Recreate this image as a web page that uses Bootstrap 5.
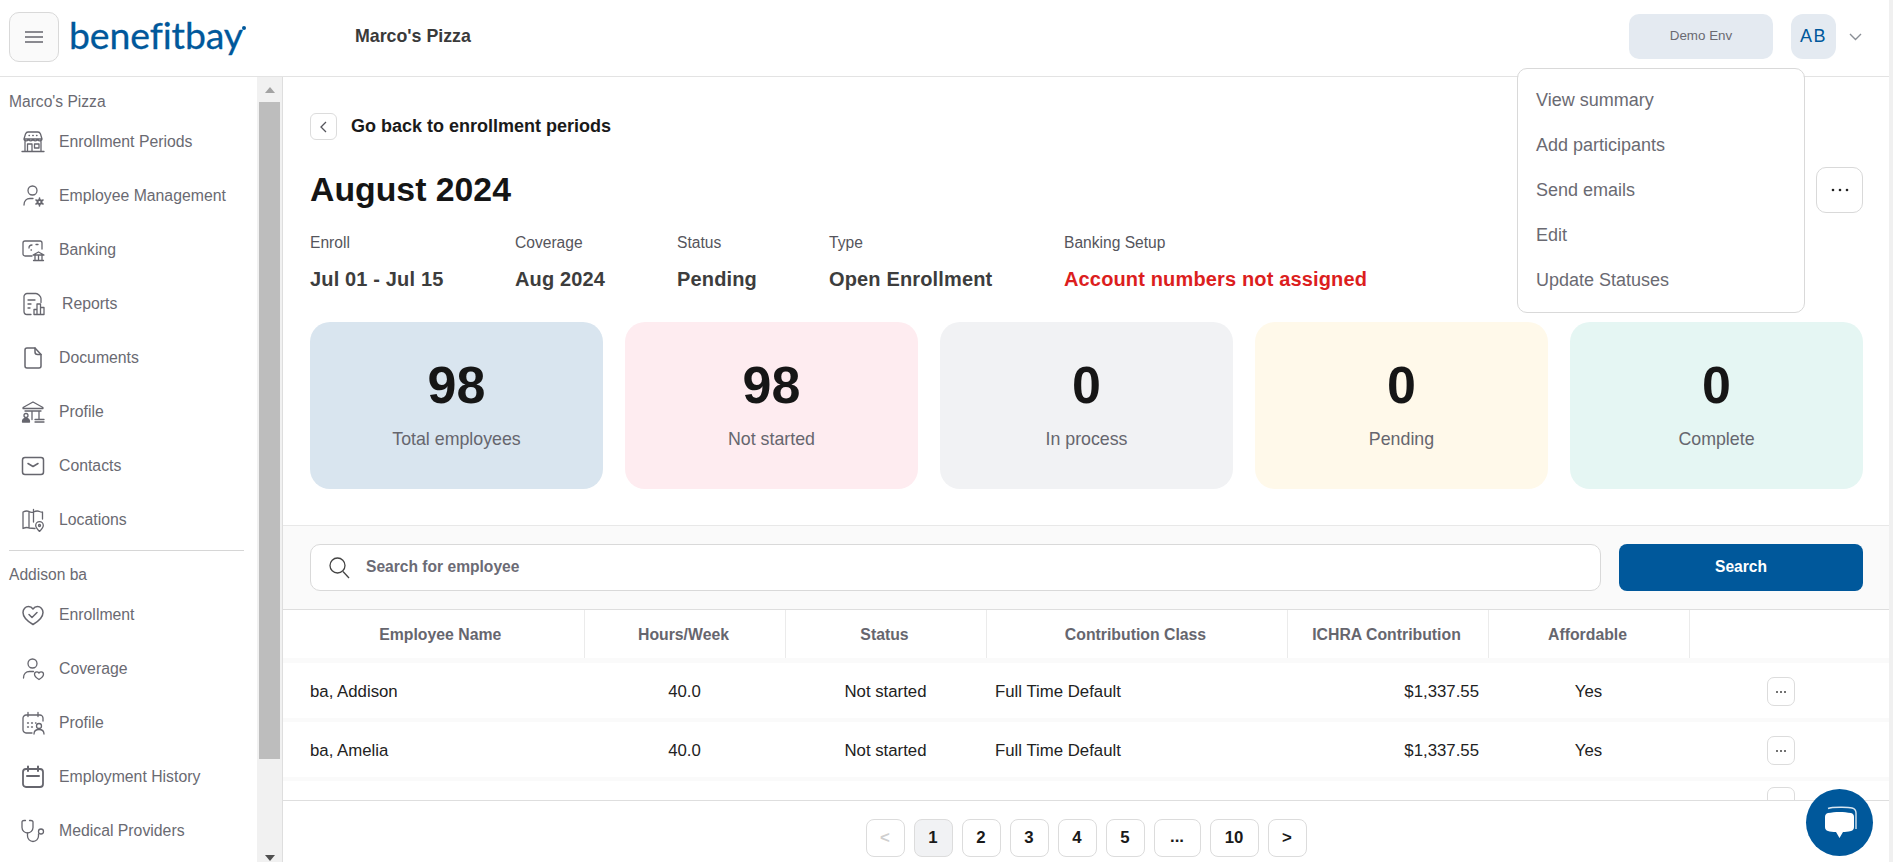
<!DOCTYPE html>
<html lang="en">
<head>
    <meta charset="UTF-8" />
    <meta name="viewport" content="width=device-width, initial-scale=1.0" />
    <title>benefitbay - Enrollment Period</title>
    <link href="https://cdn.jsdelivr.net/npm/bootstrap@5.3.0/dist/css/bootstrap.min.css" rel="stylesheet" />
    <style>
        html, body { height: 100%; overflow: hidden; }
        body { font-family: "Liberation Sans", Arial, sans-serif; color: #1a1a1a; background: #fff; }

        /* top bar */
        .top-bar { height: 77px; border-bottom: 1px solid #e3e3e3; padding: 0 31px 3px 9px; }
        .menu-btn { width: 50px; height: 50px; background: #fafafa; border: 1px solid #d9d9d9; border-radius: 10px; padding: 0; }
        .brand-logo { font-family: Lato, "Liberation Sans", sans-serif; font-size: 37.4px; line-height: 44px; color: #00589b; margin-left: 10px; width: 286px; letter-spacing: -.1px; margin-top: -3px; -webkit-text-stroke: .3px #00589b; }
        .brand-dot { display: inline-block; width: 4px; height: 4px; background: #00589b; border-radius: 50%; vertical-align: 19px; margin-left: -1px; }
        .client-name { font-size: 17.8px; font-weight: 700; color: #3a3a3a; margin-top: -1px; }
        .env-pill { width: 144px; height: 45px; background: #e4eaf1; border-radius: 10px; font-size: 13.4px; color: #6a6a72; }
        .avatar-pill { width: 45px; height: 45px; background: #e4eaf1; border-radius: 12px; font-size: 18px; color: #00589b; letter-spacing: 1.5px; margin-left: 18px; }
        .caret-svg { margin-left: 13px; }

        /* side bar */
        .side-wrap { width: 283px; border-right: 1px solid #dedede; height: 785px; flex: none; }
        .side-nav { width: 257px; padding: 0 13px 0 9px; }
        .side-title { height: 25px; line-height: 25px; font-size: 15.6px; color: #6a6a72; }
        .side-title.first { margin-top: 12px; }
        .side-title.second { margin-top: 11px; }
        .side-link { height: 54px; font-size: 15.8px; color: #6a6a72; padding: 2px 0 0 12px; gap: 14px; }
        .side-link svg { width: 24px; height: 24px; flex: none; fill: none; stroke: #66666e; stroke-width: 1.3; stroke-linecap: round; stroke-linejoin: round; }
        .side-link.shift span { margin-left: 3px; }
        .side-rule { margin: 4px 0 0 0; width: 235px; border-top: 1px solid #d6d6d6; opacity: 1; }
        .fake-scroll { width: 25px; background: #f1f1f1; flex: none; border-left: 2px solid #f1f1f1; border-right: 2px solid #f1f1f1; }
        .fake-scroll .arrow-up { width: 0; height: 0; border: 5px solid transparent; border-bottom: 6px solid #a3a3a3; border-top: 0; margin: 10px auto 9px; }
        .fake-scroll .thumb { height: 657px; background: #bdbdbd; }
        .fake-scroll .arrow-down { width: 0; height: 0; border: 5px solid transparent; border-top: 6px solid #505050; border-bottom: 0; margin: 96px auto 0; }

        /* main */
        .main-pane { width: 1606px; flex: none; height: 785px; }
        .head-part { padding: 36px 26px 36px 27px; height: 449px; border-bottom: 1px solid #e8e8e8; }
        .back-btn { width: 27px; height: 27px; border: 1px solid #dcdcdc; border-radius: 6px; background: #fff; padding: 0; }
        .back-text { font-size: 18px; font-weight: 700; margin-left: 14px; color: #1a1a1a; }
        .title-row { margin-top: 27px; height: 46px; }
        .page-title { font-size: 33.8px; font-weight: 700; margin: -2px 0 0; color: #151515; }
        .more-btn { width: 47px; height: 46px; border: 1px solid #d9d9d9; border-radius: 10px; background: #fff; padding: 0; }
        .meta-row { margin-top: 19px; }
        .meta-label { font-size: 15.6px; color: #55555c; line-height: 22px; }
        .meta-value { font-size: 20px; font-weight: 700; color: #3d3d3d; line-height: 24px; margin-top: 13px; letter-spacing: .15px; }
        .meta-a { width: 205px; } .meta-b { width: 162px; } .meta-c { width: 152px; } .meta-d { width: 235px; }
        .meta-value.alert-text { color: #dc1e1e; }
        .stat-row { margin-top: 31px; gap: 22px; }
        .stat-box { flex: 1 1 0; height: 167px; border-radius: 20px; padding-top: 33px; }
        .stat-num { font-size: 52px; font-weight: 700; line-height: 60px; color: #161616; }
        .stat-label { font-size: 17.8px; line-height: 24px; margin-top: 12px; color: #66666e; }
        .tone-blue { background: #d9e5ef; } .tone-pink { background: #feecf0; } .tone-grey { background: #f1f2f4; }
        .tone-cream { background: #fff9ea; } .tone-mint { background: #e5f6f3; }

        .search-band { height: 84px; background: #fafafa; padding: 18px 26px 0 27px; border-bottom: 1px solid #dedede; gap: 18px; }
        .search-box { width: 1291px; height: 47px; background: #fff; border: 1px solid #d9d9d9; border-radius: 10px; padding-left: 18px; }
        .search-box input { border: 0; outline: 0; background: none; font-size: 15.6px; font-weight: 700; margin: -2px 0 0 16px; flex: 1; padding: 0; }
        .search-box input::placeholder { color: #6b6b75; opacity: 1; }
        .btn-search { width: 244px; height: 47px; background: #00589b; border: 0; color: #fff; font-size: 15.6px; font-weight: 700; border-radius: 8px; padding: 0 0 2px; }
        .btn-search:hover { background: #00589b; color: #fff; }

        .table-clip { height: 190px; overflow: hidden; }
        .emp-table { table-layout: fixed; width: 1606px; margin: 0; font-size: 16.8px; }
        .emp-table th { height: 50px; background: #fff; color: #66666e; font-size: 15.8px; font-weight: 700; text-align: center; vertical-align: middle; border-bottom: 2px solid #e2e2e2; border-right: 1px solid #ebebeb; padding: 2px 2px 0 0; }
        .emp-table th.name-head { padding-left: 16px; }
        .emp-table th:last-child { border-right: 0; }
        .emp-table td { height: 59px; background: #fff; color: #222; vertical-align: middle; border-bottom: 4px solid #fafafa; padding: 2px 9px 0; box-shadow: none; }
        .emp-table tbody tr:first-child td { height: 60px; border-top: 5px solid #fafafa; }
        .emp-table td.name-cell { padding-left: 27px; }
        .emp-table td.act-cell { text-align: center; padding: 0 16px 0 0; }
        .row-btn { width: 28px; height: 29px; border: 1px solid #dcdcdc; border-radius: 7px; background: #fff; padding: 0; display: inline-flex; align-items: center; justify-content: center; margin-top: -7px; }

        .pager-part { border-top: 1px solid #dedede; padding-top: 18px; }
        .pager-list { gap: 9px; margin: 0; }
        .pager-list .page-item .page-link { height: 38px; min-width: 39px; padding: 0 6px; display: flex; align-items: center; justify-content: center; border: 1px solid #dcdcdc; border-radius: 8px !important; color: #1a1a1a; font-size: 16.8px; font-weight: 700; background: #fff; margin: 0; }
        .pager-list .page-item.active .page-link { background: #f1f2f4; color: #1a1a1a; border-color: #dcdcdc; }
        .pager-list .page-item.disabled .page-link { color: #cfcfcf; background: #fff; }
        .pager-list .wide-a .page-link { width: 47px; align-items: flex-end; padding-bottom: 7px; }
        .pager-list .wide-b .page-link { width: 49px; }

        .side-strip { width: 4px; background: #f0f0f0; height: 862px; position: absolute; right: 0; top: 0; }

        /* overlays */
        .action-menu { position: absolute; top: 68px; left: 1517px; width: 288px; height: 245px; padding: 9px 0; border: 1px solid #d9d9d9; border-radius: 10px; z-index: 20; }
        .action-menu .dropdown-item { height: 45px; padding: 0 0 0 18px; font-size: 18px; line-height: 45px; color: #6a6a72; }
        .chat-fab { position: absolute; left: 1806px; top: 789px; width: 67px; height: 67px; background: #00589b; border-radius: 50%; z-index: 30; }
    </style>
</head>
<body>
    <header class="top-bar d-flex align-items-center">
        <button class="menu-btn btn d-flex align-items-center justify-content-center" type="button">
            <svg width="18" height="12" viewBox="0 0 18 12"><path d="M0 1h18M0 6h18M0 11h18" stroke="#66666e" stroke-width="1.4"/></svg>
        </button>
        <div class="brand-logo">benefitbay<span class="brand-dot"></span></div>
        <div class="client-name">Marco's Pizza</div>
        <div class="ms-auto d-flex align-items-center">
            <div class="env-pill d-flex align-items-center justify-content-center">Demo Env</div>
            <div class="avatar-pill d-flex align-items-center justify-content-center">AB</div>
            <svg class="caret-svg" width="13" height="8" viewBox="0 0 13 8"><path d="M1 1l5.5 5.5L12 1" fill="none" stroke="#8a8f96" stroke-width="1.4"/></svg>
        </div>
    </header>

    <div class="d-flex">
        <div class="side-wrap d-flex">
            <nav class="side-nav">
                <div class="side-title first">Marco's Pizza</div>
                <a class="side-link d-flex align-items-center text-decoration-none" href="#">
                    <svg viewBox="0 0 24 24"><path d="M3 9l1.500-5C5 2.800 5.700 2 7 2h10c1.300 0 2 .8 2.500 2L21 9zM3 9c0 2.400 4.500 2.400 4.500 0 0 2.400 4.500 2.400 4.500 0 0 2.400 4.500 2.400 4.500 0 0 2.400 4.500 2.400 4.500 0M8 5.500h.5M11.700 5.500h.6M15.500 5.500h.5M4 11.500v10M20 11.500v10M1 21.500h22M6.500 21v-7h4.500v7M13.500 14h4.500v4h-4.500z"/></svg>
                    <span>Enrollment Periods</span>
                </a>
                <a class="side-link d-flex align-items-center text-decoration-none" href="#">
                    <svg viewBox="0 0 24 24"><circle cx="11.500" cy="6.500" r="4.500"/><path d="M3 21c0-4 2.500-6.500 6-6.500h3"/><circle cx="18.500" cy="18" r="2" stroke-width="2"/><path d="M18.500 14v1M18.500 21v1M15 16l1 .6M21 19.400l1 .6M15 20l1-.6M21 16.600l1-.6" stroke-width="1.600"/></svg>
                    <span>Employee Management</span>
                </a>
                <a class="side-link d-flex align-items-center text-decoration-none" href="#">
                    <svg viewBox="0 0 24 24"><path d="M11 18H4c-1.100 0-2-.9-2-2V5c0-1.100.9-2 2-2h15c1.100 0 2 .9 2 2v6"/><path d="M8 10c0-2 1.500-3 3-3M15 6.500h2M10 12h.5"/><path d="M12 17l5.500-3 5.500 3zM12.500 22.500h10M14 17.500v4M17.500 17.500v4M21 17.500v4"/></svg>
                    <span>Banking</span>
                </a>
                <a class="side-link shift d-flex align-items-center text-decoration-none" href="#">
                    <svg viewBox="0 0 24 24"><path d="M10 22.500H6c-1.500 0-3-1-3-3V4.500c0-1.500 1.500-3 3-3h9c2 0 5 3 5 5v4"/><path d="M7 8h7M7 12h3M7 16h2"/><path d="M13 22.500v-5h3v5M16 22.500V12h3.500v10.500M19.500 22.500v-7H23v7zM13 22.500h10"/></svg>
                    <span>Reports</span>
                </a>
                <a class="side-link d-flex align-items-center text-decoration-none" href="#">
                    <svg viewBox="0 0 24 24" style="stroke-width:1.500"><path d="M6 2h8l6 6.500V20c0 1.200-1 2-2 2H6c-1 0-2-.8-2-2V4c0-1 1-2 2-2z"/><path d="M14 2v4c0 1.500 1 2.500 2.500 2.500H20"/></svg>
                    <span>Documents</span>
                </a>
                <a class="side-link d-flex align-items-center text-decoration-none" href="#">
                    <svg viewBox="0 0 24 24"><path d="M2 7.500L12 2l10 5.500M2 8.500h20M4 11h16M11 11v8.500M18 11v8.500M14 22h9M14 19.500h9"/><circle cx="5" cy="15.500" r="2"/><path d="M1.500 22c0-2.700 1-3.500 3.500-3.500S8.500 19.300 8.500 22z" fill="#66666e"/></svg>
                    <span>Profile</span>
                </a>
                <a class="side-link d-flex align-items-center text-decoration-none" href="#">
                    <svg viewBox="0 0 24 24" style="stroke-width:1.500"><rect x="1.500" y="3.500" width="21" height="17" rx="2.500"/><path d="M7 9.500l5 3 5-3"/></svg>
                    <span>Contacts</span>
                </a>
                <a class="side-link d-flex align-items-center text-decoration-none" href="#">
                    <svg viewBox="0 0 24 24"><path d="M2 4c2-1 4-1.500 6-.5v16.500c-2-1-4-.5-6 .5zM8 3.500c1.500 1 3.500 1 4.500.5M12.500 4V14M12.500 1.500v2.500M12.500 4c2-1 4-1.500 6-.5 1 .5 2 1 3 .5v7M8 20l6 .5"/><path d="M18.500 23.500c-2-2-3.800-4-3.800-6a3.800 3.800 0 0 1 7.600 0c0 2-1.800 4-3.800 6z"/><circle cx="18.500" cy="17.500" r="1"/></svg>
                    <span>Locations</span>
                </a>
                <hr class="side-rule" />
                <div class="side-title second">Addison ba</div>
                <a class="side-link d-flex align-items-center text-decoration-none" href="#">
                    <svg viewBox="0 0 24 24" style="stroke-width:1.500"><path d="M12 21.500C6 18 2 14.500 2 9.500 2 6 4.500 3.500 7.500 3.500c2 0 3.500 1 4.500 2.500 1-1.500 2.500-2.500 4.500-2.500 3 0 5.500 2.500 5.500 6 0 5-4 8.500-10 12z"/><path d="M8 11.500l3 3 5-5"/></svg>
                    <span>Enrollment</span>
                </a>
                <a class="side-link d-flex align-items-center text-decoration-none" href="#">
                    <svg viewBox="0 0 24 24"><circle cx="11.500" cy="6.500" r="4.500"/><path d="M2.500 21c0-4 2.500-6.500 6-6.500h4"/><path d="M18 22.500c-2.500-1.500-4.500-3-4.500-5.200 0-1.500 1-2.500 2.300-2.500.9 0 1.700.5 2.200 1.200.5-.7 1.300-1.200 2.200-1.200 1.300 0 2.300 1 2.300 2.500 0 2.200-2 3.700-4.500 5.200z"/></svg>
                    <span>Coverage</span>
                </a>
                <a class="side-link d-flex align-items-center text-decoration-none" href="#">
                    <svg viewBox="0 0 24 24"><path d="M11 22H5c-1.500 0-3-1.500-3-3V7c0-1.500 1.500-3 3-3h14c1.500 0 3 1.500 3 3v3M7 1.500v4M17 1.500v4"/><path d="M6.500 12h1M10.500 12h1M14.500 12h.5M6.500 16h1M10.500 16h1"/><circle cx="18" cy="15" r="2.500"/><path d="M13 23c0-3 2-4.500 5-4.500s5 1.500 5 4.500"/></svg>
                    <span>Profile</span>
                </a>
                <a class="side-link d-flex align-items-center text-decoration-none" href="#">
                    <svg viewBox="0 0 24 24" style="stroke-width:1.800"><rect x="2" y="4" width="20" height="18" rx="3"/><path d="M7 1.500V6M17 1.500V6M6 11h12" stroke-width="2"/></svg>
                    <span>Employment History</span>
                </a>
                <a class="side-link d-flex align-items-center text-decoration-none" href="#">
                    <svg viewBox="0 0 24 24"><path d="M4.500 1.500H3C2 1.500 1 2 1 3v5.500c0 3 2.500 5.500 5.500 5.500S12 11.500 12 8.500V3c0-1-1-1.500-2-1.500H8.500"/><path d="M6.500 14v3c0 3 2.500 5.500 5.500 5.500s5.500-2.500 5.500-5.500v-2"/><circle cx="20" cy="12.500" r="2.500"/></svg>
                    <span>Medical Providers</span>
                </a>
            </nav>
            <div class="fake-scroll">
                <div class="arrow-up"></div>
                <div class="thumb"></div>
                <div class="arrow-down"></div>
            </div>
        </div>

        <main class="main-pane d-flex flex-column">
            <section class="head-part">
                <div class="d-flex align-items-center">
                    <button class="back-btn btn d-flex align-items-center justify-content-center" type="button">
                        <svg width="7" height="12" viewBox="0 0 7 12"><path d="M6 1L1 6l5 5" fill="none" stroke="#55555c" stroke-width="1.300"/></svg>
                    </button>
                    <span class="back-text">Go back to enrollment periods</span>
                </div>
                <div class="title-row d-flex align-items-center justify-content-between">
                    <h1 class="page-title">August 2024</h1>
                    <button class="more-btn btn d-flex align-items-center justify-content-center" type="button">
                        <svg width="18" height="4" viewBox="0 0 18 4"><circle cx="2" cy="2" r="1.300" fill="#222"/><circle cx="9" cy="2" r="1.300" fill="#222"/><circle cx="16" cy="2" r="1.300" fill="#222"/></svg>
                    </button>
                </div>
                <div class="meta-row d-flex">
                    <div class="meta-a"><div class="meta-label">Enroll</div><div class="meta-value">Jul 01 - Jul 15</div></div>
                    <div class="meta-b"><div class="meta-label">Coverage</div><div class="meta-value">Aug 2024</div></div>
                    <div class="meta-c"><div class="meta-label">Status</div><div class="meta-value">Pending</div></div>
                    <div class="meta-d"><div class="meta-label">Type</div><div class="meta-value">Open Enrollment</div></div>
                    <div><div class="meta-label">Banking Setup</div><div class="meta-value alert-text">Account numbers not assigned</div></div>
                </div>
                <div class="stat-row d-flex">
                    <div class="stat-box tone-blue text-center"><div class="stat-num">98</div><div class="stat-label">Total employees</div></div>
                    <div class="stat-box tone-pink text-center"><div class="stat-num">98</div><div class="stat-label">Not started</div></div>
                    <div class="stat-box tone-grey text-center"><div class="stat-num">0</div><div class="stat-label">In process</div></div>
                    <div class="stat-box tone-cream text-center"><div class="stat-num">0</div><div class="stat-label">Pending</div></div>
                    <div class="stat-box tone-mint text-center"><div class="stat-num">0</div><div class="stat-label">Complete</div></div>
                </div>
            </section>

            <section class="search-band d-flex align-items-start">
                <div class="search-box d-flex align-items-center">
                    <svg width="21" height="22" viewBox="0 0 21 22"><circle cx="8.500" cy="8.500" r="7.500" fill="none" stroke="#444" stroke-width="1.300"/><path d="M14 14.500l6 6.500" stroke="#444" stroke-width="1.300"/></svg>
                    <input type="text" placeholder="Search for employee" />
                </div>
                <button class="btn-search btn" type="button">Search</button>
            </section>

            <div class="table-clip">
                <table class="table emp-table">
                    <colgroup>
                        <col style="width:301px"><col style="width:201px"><col style="width:201px"><col style="width:301px"><col style="width:201px"><col style="width:201px"><col>
                    </colgroup>
                    <thead>
                        <tr>
                            <th class="name-head">Employee Name</th><th>Hours/Week</th><th>Status</th><th>Contribution Class</th><th>ICHRA Contribution</th><th>Affordable</th><th></th>
                        </tr>
                    </thead>
                    <tbody>
                        <tr>
                            <td class="name-cell">ba, Addison</td><td class="text-center">40.0</td><td class="text-center">Not started</td><td>Full Time Default</td><td class="text-end">$1,337.55</td><td class="text-center">Yes</td>
                            <td class="act-cell"><button class="row-btn" type="button"><svg width="10" height="2" viewBox="0 0 10 2"><path d="M0 1h2M4 1h2M8 1h2" stroke="#444" stroke-width="1.400"/></svg></button></td>
                        </tr>
                        <tr>
                            <td class="name-cell">ba, Amelia</td><td class="text-center">40.0</td><td class="text-center">Not started</td><td>Full Time Default</td><td class="text-end">$1,337.55</td><td class="text-center">Yes</td>
                            <td class="act-cell"><button class="row-btn" type="button"><svg width="10" height="2" viewBox="0 0 10 2"><path d="M0 1h2M4 1h2M8 1h2" stroke="#444" stroke-width="1.400"/></svg></button></td>
                        </tr>
                        <tr>
                            <td class="name-cell"></td><td></td><td></td><td></td><td></td><td></td>
                            <td class="act-cell"><button class="row-btn" type="button"></button></td>
                        </tr>
                    </tbody>
                </table>
            </div>

            <footer class="pager-part">
                <ul class="pagination pager-list justify-content-center">
                    <li class="page-item disabled"><a class="page-link" href="#">&lt;</a></li>
                    <li class="page-item active"><a class="page-link" href="#">1</a></li>
                    <li class="page-item"><a class="page-link" href="#">2</a></li>
                    <li class="page-item"><a class="page-link" href="#">3</a></li>
                    <li class="page-item"><a class="page-link" href="#">4</a></li>
                    <li class="page-item"><a class="page-link" href="#">5</a></li>
                    <li class="page-item wide-a"><a class="page-link" href="#">...</a></li>
                    <li class="page-item wide-b"><a class="page-link" href="#">10</a></li>
                    <li class="page-item"><a class="page-link" href="#">&gt;</a></li>
                </ul>
            </footer>
        </main>
    </div>

    <div class="side-strip"></div>

    <ul class="dropdown-menu show action-menu">
        <li><a class="dropdown-item" href="#">View summary</a></li>
        <li><a class="dropdown-item" href="#">Add participants</a></li>
        <li><a class="dropdown-item" href="#">Send emails</a></li>
        <li><a class="dropdown-item" href="#">Edit</a></li>
        <li><a class="dropdown-item" href="#">Update Statuses</a></li>
    </ul>

    <div class="chat-fab d-flex align-items-center justify-content-center">
        <svg width="36" height="34" viewBox="0 0 36 34">
            <path d="M6 2.500C10 1 26 1 30 2c3 .8 4 2 4 5v16" fill="none" stroke="#fff" stroke-width="1.400" opacity=".85"/>
            <path d="M6 7c7-1.500 16-1.500 23 0 2 .5 3 2 3 4v10c0 2-1 3.500-3 4-3 .8-6 1-8 1.100L17.500 32 14 26.100c-3-.1-6-.3-8-1.100-2-.5-3-2-3-4V11c0-2 1-3.500 3-4z" fill="#fff"/>
        </svg>
    </div>

    <script src="https://cdn.jsdelivr.net/npm/bootstrap@5.3.0/dist/js/bootstrap.bundle.min.js"></script>
</body>
</html>
